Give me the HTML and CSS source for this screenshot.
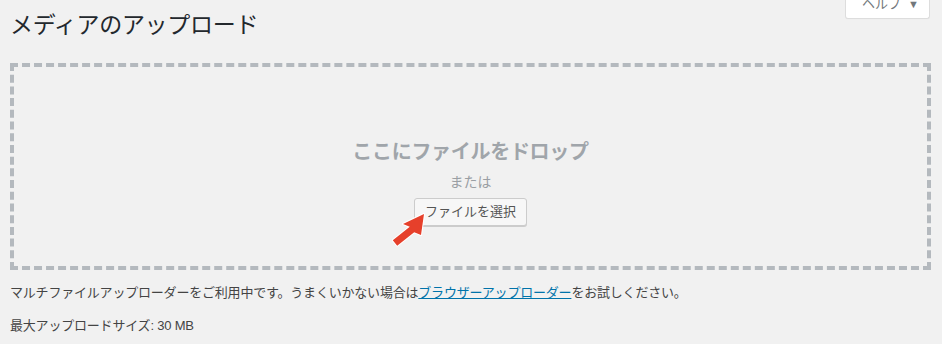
FILE: index.html
```html
<!DOCTYPE html>
<html lang="ja">
<head>
    <meta charset="UTF-8">
    <meta name="viewport" content="width=device-width, initial-scale=1.0">
    <title>メディアのアップロード</title>
    <link rel="stylesheet" href="styles.css">
</head>
<body>
    <div class="help-tab">ヘルプ<span class="caret">▼</span></div>
    <div class="wrap">
        <h1 class="page-title">メディアのアップロード</h1>
        <div class="drop-area">
            <div class="drop-inside">
                <p class="drop-info">ここにファイルをドロップ</p>
                <p class="drop-or">または</p>
                <button class="select-btn" type="button">ファイルを選択</button>
            </div>
        </div>
        <p class="upload-note">マルチファイルアップローダーをご利用中です。うまくいかない場合は<a href="#">ブラウザーアップローダー</a>をお試しください。</p>
        <p class="upload-note">最大アップロードサイズ: 30 MB</p>
    </div>
    <svg class="pointer-arrow" width="45" height="40" viewBox="388 208 45 40">
        <polygon points="424,214 421,235 414.2,232.2 397.2,245.7 392.8,240.3 409.8,226.8 403,224" fill="#e6402b" stroke="#fff" stroke-width="2" stroke-linejoin="round" paint-order="stroke"/>
    </svg>
</body>
</html>
```

FILE: styles.css
```css
* {
    margin: 0;
    box-sizing: border-box;
}

body {
    position: relative;
    height: 344px;
    overflow: hidden;
    background-color: #f1f1f1;
    color: #444;
    font-family: "Liberation Sans", "Noto Sans CJK JP", sans-serif;
    font-size: 13px;
}

.wrap {
    padding: 0 11px 0 10px;
}

.page-title {
    padding-top: 11px;
    margin-bottom: 23px;
    font-size: 23px;
    font-weight: 400;
    line-height: 29px;
    letter-spacing: -0.3px;
    color: #23282d;
}

.drop-area {
    height: 207px;
    border: 4px dashed #b4b9be;
}

.drop-inside {
    display: flex;
    flex-direction: column;
    align-items: center;
    padding-top: 70px;
}

.drop-info {
    font-size: 20px;
    font-weight: 600;
    line-height: 30px;
    letter-spacing: -0.3px;
    color: #a0a5aa;
}

.drop-or {
    margin-top: 5px;
    font-size: 14px;
    line-height: 20px;
    color: #9a9fa4;
}

.select-btn {
    height: 28px;
    margin-top: 6px;
    padding: 0 10px;
    border: 1px solid #ccc;
    border-radius: 3px;
    background-color: #f7f7f7;
    box-shadow: 0 1px 0 #ccc;
    color: #555;
    font-family: inherit;
    font-size: 13px;
    line-height: 26px;
}

.upload-note {
    margin-top: 13px;
    line-height: 20px;
    letter-spacing: -0.2px;
}

.upload-note a {
    color: #0073aa;
    text-decoration: underline;
}

.help-tab {
    position: absolute;
    top: -9px;
    right: 12px;
    width: 85px;
    padding: 2px 6px 3px 16px;
    border: 1px solid #ddd;
    border-top: none;
    border-radius: 0 0 3px 3px;
    background-color: #fff;
    box-shadow: 0 1px 1px -1px rgba(0, 0, 0, 0.1);
    color: #72777c;
    line-height: 22px;
}

.caret {
    margin-left: 7px;
    font-size: 11px;
}

.pointer-arrow {
    position: absolute;
    left: 388px;
    top: 208px;
}
```
